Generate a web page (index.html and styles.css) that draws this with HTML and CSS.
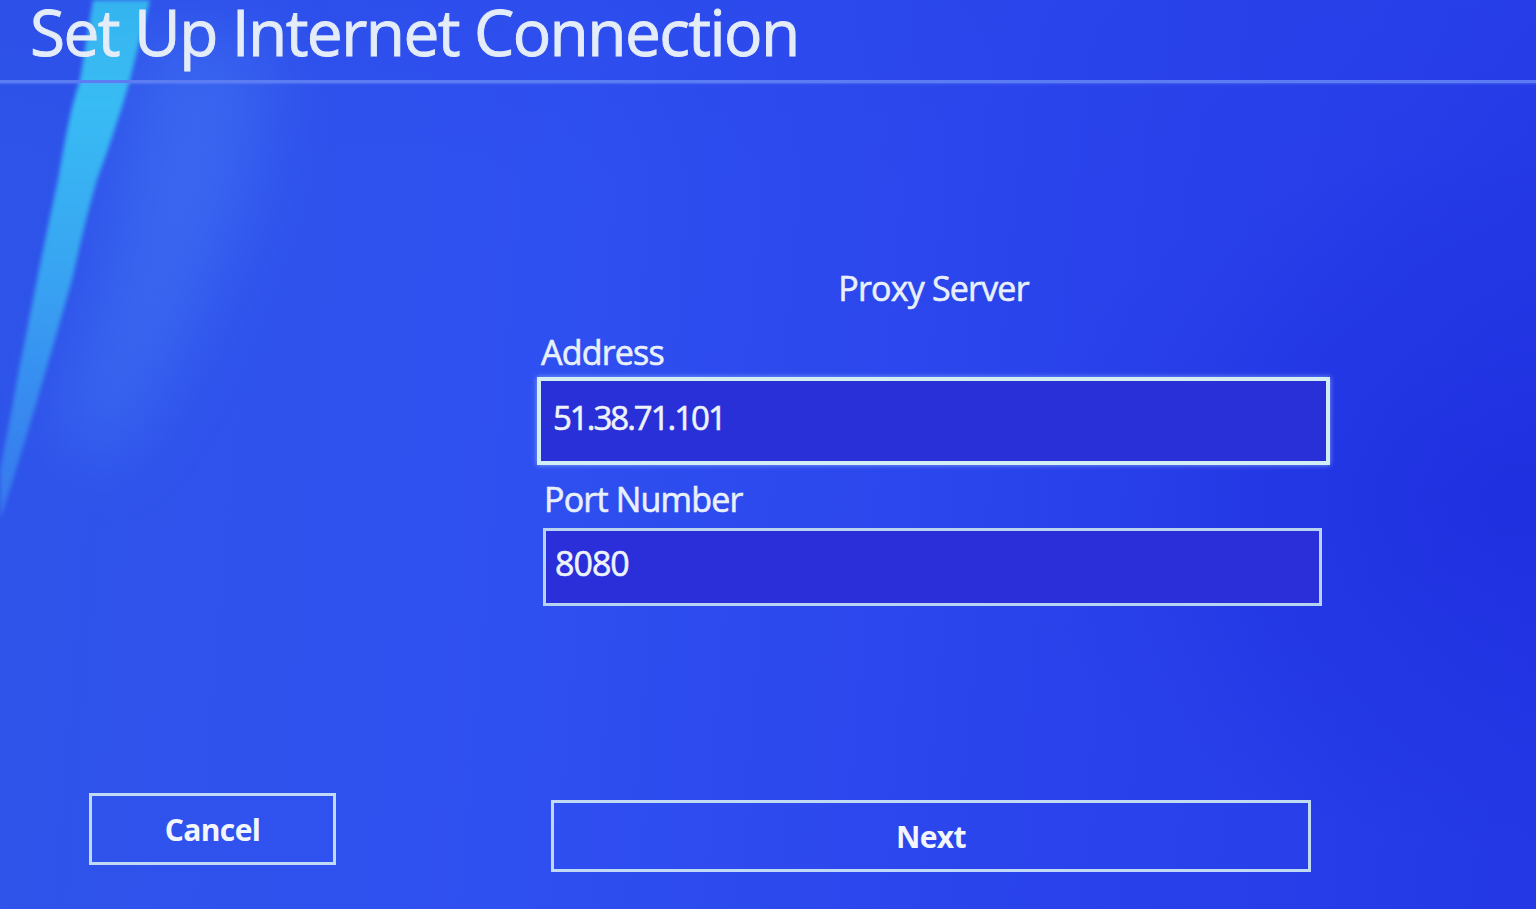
FILE: index.html
```html
<!DOCTYPE html>
<html lang="en">
<head>
<meta charset="utf-8">
<title>Set Up Internet Connection</title>
<link rel="stylesheet" href="styles.css">
</head>
<body>
<div class="screen">
  <svg class="streak" width="340" height="620" viewBox="0 0 340 620" aria-hidden="true">
    <defs>
      <linearGradient id="beam" x1="0" y1="0" x2="0" y2="1">
        <stop offset="0" stop-color="#36b4f0"/>
        <stop offset="0.2" stop-color="#38bcf4"/>
        <stop offset="0.55" stop-color="#38a2f2"/>
        <stop offset="1" stop-color="#3a86f0" stop-opacity="0.7"/>
      </linearGradient>
      <filter id="soft" x="-50%" y="-10%" width="200%" height="120%">
        <feGaussianBlur stdDeviation="2"/>
      </filter>
      <filter id="glow" x="-60%" y="-30%" width="220%" height="160%">
        <feGaussianBlur stdDeviation="35"/>
      </filter>
    </defs>
    <path d="M140,20 L280,40 L250,200 L190,340 L110,470 L60,430 L110,250 Z" fill="#5a9cff" opacity="0.26" filter="url(#glow)"/>
    <path d="M93,0 L150,0 C143,30 136,55 130,80 C120,115 108,150 97,180 C88,210 80,245 72,280 C62,315 52,350 43,380 C33,415 22,450 13,480 L0,520 L0,470 C6,440 12,410 17,380 C24,345 30,315 37,280 C44,245 51,212 58,180 C64,145 70,110 80,80 C85,50 89,25 93,0 Z" fill="url(#beam)" filter="url(#soft)"/>
  </svg>

  <header class="topbar">
    <h1 class="title">Set Up Internet Connection</h1>
  </header>

  <main class="form">
    <h2 class="form-heading">Proxy Server</h2>

    <label class="field-label">Address</label>
    <div class="field field-active">
      <span class="field-value field-value-address">51.38.71.101</span>
    </div>

    <label class="field-label field-label-port">Port Number</label>
    <div class="field field-port">
      <span class="field-value">8080</span>
    </div>
  </main>

  <footer class="actions">
    <button class="btn btn-cancel" type="button">Cancel</button>
    <button class="btn btn-next" type="button">Next</button>
  </footer>
</div>
</body>
</html>
```

FILE: styles.css
```css
* {
  box-sizing: border-box;
}

html,
body {
  margin: 0;
  padding: 0;
}

body {
  width: 1536px;
  height: 909px;
  overflow: hidden;
  font-family: "Open Sans", "Noto Sans", sans-serif;
  color: #e9f0fb;
}

.screen {
  position: relative;
  width: 1536px;
  height: 909px;
  display: flex;
  flex-direction: column;
  overflow: hidden;
  background:
    radial-gradient(ellipse 700px 500px at 1500px 500px, rgba(20, 30, 210, 0.35), rgba(20, 30, 210, 0) 70%),
    linear-gradient(180deg, rgba(40, 70, 230, 0.25) 0%, rgba(40, 70, 230, 0) 20%),
    linear-gradient(95deg, #2e54e8 0%, #2f50f0 35%, #2a44ec 65%, #2438e6 100%);
}

/* light beam sweeping down the left side of the backdrop */
.streak {
  position: absolute;
  left: 0;
  top: 0;
  z-index: 0;
  pointer-events: none;
}

.topbar,
.form,
.actions {
  position: relative;
  z-index: 1;
}

.topbar {
  height: 83px;
  padding: 2px 0 0 30px;
  border-bottom: 3px solid #5b7cf2;
  box-shadow: 0 1px 2px rgba(120, 150, 255, 0.4);
}

.title {
  margin: 0;
  font-size: 64px;
  line-height: 60px;
  font-weight: 400;
  letter-spacing: -1.6px;
  color: #e4ecf8;
  -webkit-text-stroke: 0.9px #e4ecf8;
  white-space: nowrap;
}

.form {
  width: 793px;
  margin: 185px 0 0 537px;
  display: flex;
  flex-direction: column;
}

.form-heading {
  margin: 0;
  font-size: 34px;
  line-height: 40px;
  font-weight: 400;
  letter-spacing: -0.8px;
  text-align: center;
  -webkit-text-stroke: 0.6px #e9f0fb;
}

.field-label {
  display: block;
  margin: 24px 0 5px 4px;
  font-size: 34px;
  line-height: 40px;
  font-weight: 400;
  letter-spacing: -0.8px;
  -webkit-text-stroke: 0.6px #e9f0fb;
}

.field-label-port {
  margin: 14px 0 9px 7px;
}

.field {
  display: flex;
  align-items: flex-start;
  background: #2a30d8;
}

.field-active {
  height: 88px;
  padding: 17px 12px 0;
  border: 4px solid #d3edf4;
  box-shadow: 0 0 5px rgba(200, 240, 255, 0.55), inset 0 0 0 1px rgba(40, 50, 200, 0.6);
}

.field-port {
  width: 779px;
  height: 78px;
  margin-left: 6px;
  padding: 12px 9px 0;
  border: 3px solid #b7d3f2;
  background: #2a2fd9;
}

.field-value {
  font-size: 34px;
  line-height: 40px;
  font-weight: 400;
  letter-spacing: -1px;
  color: #eef3fb;
  -webkit-text-stroke: 0.6px #eef3fb;
}

.field-value-address {
  font-size: 33px;
  letter-spacing: -2px;
}

.actions {
  display: flex;
  align-items: flex-start;
  margin-top: auto;
  padding: 0 0 37px 89px;
  gap: 215px;
}

.btn {
  height: 72px;
  padding: 0;
  border: 3px solid #c0d9f5;
  background: rgba(60, 90, 255, 0.08);
  color: #f2f6fc;
  font-family: "Open Sans", "Noto Sans", sans-serif;
  font-size: 30px;
  font-weight: 700;
  letter-spacing: -0.6px;
  cursor: pointer;
}

.btn-cancel {
  width: 247px;
  margin-top: -3px;
}

.btn-next {
  width: 760px;
  margin-top: 4px;
}
```
